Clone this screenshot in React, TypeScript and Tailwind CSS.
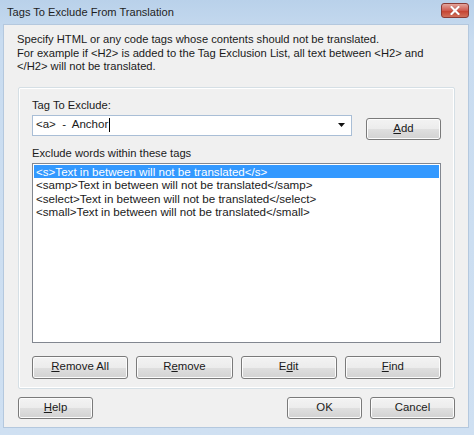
import React from "react";

const font = { fontFamily: '"Liberation Sans", Arial, sans-serif' };

function Btn({ children, className = "" }: { children: React.ReactNode; className?: string }) {
  return (
    <div
      className={
        "flex items-center justify-center rounded-[3px] border border-[#7a7a7a] text-[11.4px] text-[#1a1a1a] shadow-[inset_0_0_0_1px_#fcfcfc] bg-[linear-gradient(to_bottom,#f3f3f3_0%,#ececec_50%,#dfdfdf_51%,#d2d2d2_100%)] " +
        className
      }
    >
      {children}
    </div>
  );
}

export default function App() {
  const rows = [
    "<s>Text in between will not be translated</s>",
    "<samp>Text in between will not be translated</samp>",
    "<select>Text in between will not be translated</select>",
    "<small>Text in between will not be translated</small>",
  ];
  return (
    <div
      style={font}
      className="flex h-[435px] w-[474px] flex-col overflow-hidden bg-[linear-gradient(to_bottom,#b9d1ea,#c9dcf0_40px,#cfe0f2)] text-[11.2px] text-[#1a1a1a]"
    >
      {/* Title bar */}
      <div className="flex h-[24px] shrink-0 items-center justify-between pl-[7px] pr-[5px]">
        <span className="pt-[1px] text-[11.1px] text-[#1e1e1e]">Tags To Exclude From Translation</span>
        <div className="mt-[-3px] flex h-[15px] w-[28px] items-center justify-center rounded-[3px] border border-[#8a3b35] bg-[linear-gradient(to_bottom,#e3a59c,#cf5b4f_50%,#c4402f_51%,#d1705b)]">
          <svg width="10" height="9" viewBox="0 0 10 9">
            <path d="M1.5 1 L8.5 8 M8.5 1 L1.5 8" stroke="#4a1c18" strokeWidth="3" strokeLinecap="square" opacity="0.35" />
            <path d="M1.5 1 L8.5 8 M8.5 1 L1.5 8" stroke="#ffffff" strokeWidth="2.2" strokeLinecap="square" />
          </svg>
        </div>
      </div>

      {/* Client area */}
      <div className="ml-[3px] mr-[5px] flex flex-1 flex-col border border-[#b4c8de] bg-[#f0f0f0] pb-[7px]">
        <div className="pl-[13px] pt-[8px] leading-[13.5px]">
          <div>Specify HTML or any code tags whose contents should not be translated.</div>
          <div>For example if &lt;H2&gt; is added to the Tag Exclusion List, all text between &lt;H2&gt; and</div>
          <div>&lt;/H2&gt; will not be translated.</div>
        </div>

        {/* Group box */}
        <div className="ml-[14px] mr-[13px] mt-[13px] flex h-[302px] flex-col rounded-[2px] border border-[#d5dfe5] px-[13px] pb-[7px] shadow-[inset_0_0_0_1px_#ffffff]">
          <div className="mt-[11px] leading-[13px]">Tag To Exclude:</div>
          <div className="mt-[3px] flex items-start">
            <div className="flex h-[21px] w-[320px] items-center border border-[#a9bed6] bg-white pl-[3px] pr-[6px] text-[11.5px]">
              <span className="whitespace-pre">&lt;a&gt;  -  Anchor</span>
              <span className="ml-[1px] h-[14px] w-[1px] bg-black" />
              <div className="flex-1" />
              <svg width="7" height="4" viewBox="0 0 7 4">
                <path d="M0 0 H7 L3.5 4 Z" fill="#111" />
              </svg>
            </div>
            <div className="flex-1" />
            <Btn className="mt-[3px] h-[22px] w-[75px]">
              <span>
                <span className="underline">A</span>dd
              </span>
            </Btn>
          </div>
          <div className="mt-[7px] leading-[13px]">Exclude words within these tags</div>
          <div className="mt-[3px] h-[180px] border border-[#828790] bg-white p-[1px] text-[11.6px]">
            {rows.map((r, i) => (
              <div
                key={i}
                className={
                  "flex h-[13.5px] items-center pl-[2px] leading-[13px] " +
                  (i === 0 ? "bg-[#3399ff] text-white" : "")
                }
              >
                {r}
              </div>
            ))}
          </div>
          <div className="mt-[13px] grid grid-cols-4 gap-[8px]">
            <Btn className="h-[23px]">
              <span>
                <span className="underline">R</span>emove All
              </span>
            </Btn>
            <Btn className="h-[23px]">
              <span>
                R<span className="underline">e</span>move
              </span>
            </Btn>
            <Btn className="h-[23px]">
              <span>
                E<span className="underline">d</span>it
              </span>
            </Btn>
            <Btn className="h-[23px]">
              <span>
                <span className="underline">F</span>ind
              </span>
            </Btn>
          </div>
        </div>

        {/* Bottom buttons */}
        <div className="mt-[8px] flex items-center pl-[14px] pr-[13px]">
          <Btn className="h-[22px] w-[75px]">
            <span>
              <span className="underline">H</span>elp
            </span>
          </Btn>
          <div className="flex-1" />
          <Btn className="h-[22px] w-[75px]">OK</Btn>
          <Btn className="ml-[8px] h-[22px] w-[85px]">Cancel</Btn>
        </div>
      </div>
      <div className="h-[7px] shrink-0" />
    </div>
  );
}
